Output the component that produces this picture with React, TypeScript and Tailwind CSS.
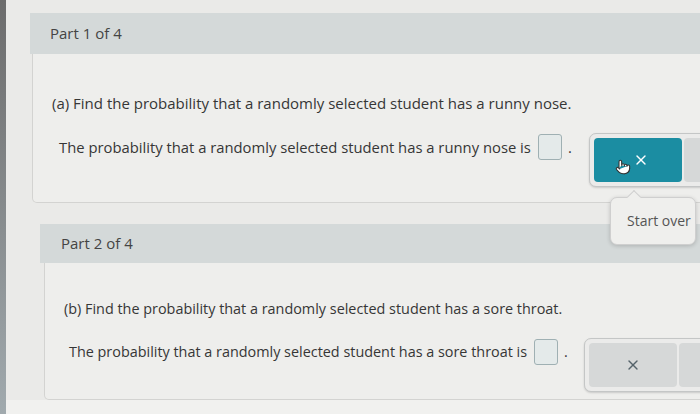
import { Pointer, X } from 'lucide-react';

const font = { fontFamily: '"Open Sans", "Liberation Sans", sans-serif' };

function AnswerBox() {
  return <span className="ml-[7px] mr-[6px] inline-block h-[26px] w-[24px] shrink-0 rounded-[3px] border border-[#9fb0b3] bg-[#e4eaea]" />;
}

function ButtonFrame({ active }: { active: boolean }) {
  return (
    <div className="relative flex h-[54px] w-[140px] shrink-0 gap-[2px] rounded-[7px] border border-[#c4c6c6] bg-[#ebebea] p-[4px] shadow-[0_1px_2px_rgba(0,0,0,0.15)]">
      <button
        className={
          active
            ? 'relative flex h-full w-[88px] items-center justify-center rounded-[4px] bg-[#1b8da2] text-white'
            : 'relative flex h-full w-[88px] items-center justify-center rounded-[4px] bg-[#d6d8d8] text-[#55636a]'
        }
      >
        <X size={16} strokeWidth={2} className={active ? 'ml-[6px]' : ''} />
        {active && (
          <Pointer
            size={16}
            strokeWidth={1.6}
            className="absolute left-[21px] top-[21px] fill-white text-[#333]"
          />
        )}
      </button>
      <div className="h-full w-[40px] rounded-[4px] bg-[#d6d8d8]" />
      {active && (
        <div className="absolute left-[20px] top-[63px] z-10 h-[48px] w-[86px] rounded-[7px] border border-[#cfcfcf] bg-[#efefed] pl-[16px] text-[14px] leading-[46px] text-[#555] shadow-[0_1px_4px_rgba(0,0,0,0.18)]">
          <span className="absolute -top-[6px] left-[18px] h-[10px] w-[10px] rotate-45 border-l border-t border-[#cfcfcf] bg-[#efefed]" />
          <span className="relative">Start over</span>
        </div>
      )}
    </div>
  );
}

export default function App() {
  return (
    <div className="flex h-[414px] w-[700px] overflow-hidden bg-[#eaeae8] text-[15px] text-[#363636]" style={font}>
      <div className="w-[6px] shrink-0 bg-gradient-to-b from-[#6c6c6c] to-[#a1aaae]" />
      <div className="flex flex-col">
        {/* Part 1 */}
        <section className="ml-[24px] mt-[13px] w-[700px]">
          <div className="flex h-[41px] items-center bg-[#d4d9d9] pl-[20px] text-[#444]">Part 1 of 4</div>
          <div className="ml-[2px] h-[149px] rounded-b-[5px] border border-t-0 border-[#d3d3d1] bg-[#eeeeec] pl-[19px] pt-[39px]">
            <p className="leading-[20px]">(a) Find the probability that a randomly selected student has a runny nose.</p>
            <div className="mt-[20px] flex">
              <div className="ml-[7px] flex h-[28px] w-[535px] items-center whitespace-nowrap text-[14.8px]">
                The probability that a randomly selected student has a runny nose is
                <AnswerBox />.
              </div>
              <ButtonFrame active />
            </div>
          </div>
        </section>

        {/* Part 2 */}
        <section className="ml-[34px] mt-[21px] w-[700px]">
          <div className="flex h-[39px] items-center bg-[#d4d9d9] pl-[21px] text-[#444]">Part 2 of 4</div>
          <div className="ml-[4px] h-[137px] rounded-b-[5px] border border-t-0 border-[#d3d3d1] bg-[#eeeeec] pl-[19px] pt-[36px] text-[14.4px]">
            <p className="leading-[20px]">(b) Find the probability that a randomly selected student has a sore throat.</p>
            <div className="mt-[19px] flex">
              <div className="ml-[5px] flex h-[28px] w-[515px] items-center whitespace-nowrap">
                The probability that a randomly selected student has a sore throat is
                <AnswerBox />.
              </div>
              <ButtonFrame active={false} />
            </div>
          </div>
        </section>
        <div className="h-[14px] bg-[#f1f1ef]" />
      </div>
    </div>
  );
}
